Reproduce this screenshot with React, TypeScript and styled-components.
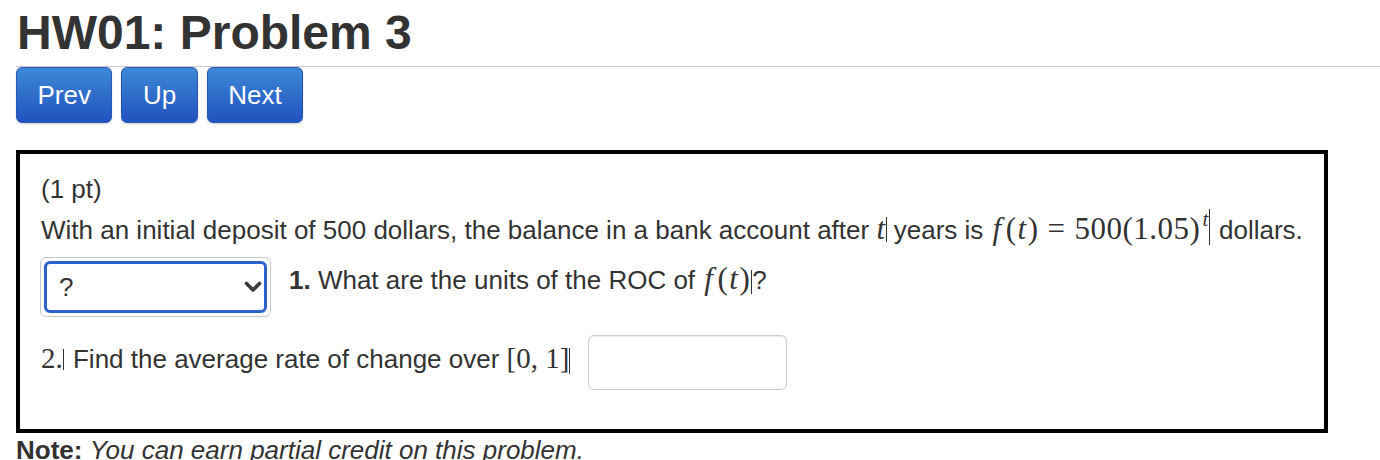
import React from "react";
import styled, { createGlobalStyle } from "styled-components";

const Global = createGlobalStyle`
  html, body { margin: 0; padding: 0; background: #fff; }
  body {
    font-family: "Liberation Sans", Arial, Helvetica, sans-serif;
    color: #333;
    overflow: hidden;
  }
`;

const Page = styled.div`
  padding-left: 16px;
  width: 1364px;
`;

const Title = styled.h1`
  margin: 0;
  padding: 9px 0 0 1px;
  font-size: 48px;
  line-height: 48px;
  font-weight: 700;
  color: #333;
`;

const Rule = styled.hr`
  margin: 9px 0 0;
  border: 0;
  border-top: 1px solid #cccccc;
  height: 0;
`;

const NavBar = styled.div`
  display: flex;
  gap: 9px;
`;

const NavButton = styled.button`
  height: 56px;
  padding: 0 20.5px;
  font-family: inherit;
  font-size: 26px;
  color: #fff;
  background: linear-gradient(#3d89d6, #2152bf);
  border: 1px solid #2a56b6;
  border-radius: 6px;
  box-shadow: 0 1px 2px rgba(0, 0, 0, 0.2);
  cursor: pointer;
`;

const ProblemBox = styled.div`
  margin-top: 27px;
  width: 1312px;
  box-sizing: border-box;
  border: 4px solid #000;
  padding: 16px 20px 39px 21px;
  font-size: 26px;
  line-height: 39px;
`;

const Line = styled.div`
  white-space: nowrap;
`;

const Row = styled.div<{ $top: number }>`
  display: flex;
  align-items: flex-start;
  margin-top: ${(p) => p.$top}px;
  white-space: nowrap;
`;

const RowText = styled.div<{ $pad: number }>`
  padding-top: ${(p) => p.$pad}px;
`;

const Math = styled.span<{ $small?: boolean }>`
  font-family: "Liberation Serif", "Times New Roman", serif;
  font-size: ${(p) => (p.$small ? 29 : 31)}px;
  letter-spacing: ${(p) => (p.$small ? 0 : 0.5)}px;
  line-height: 1;
`;

const MathVar = styled.span`
  font-style: italic;
`;

const FVar = styled.span`
  font-style: italic;
  padding: 0 4px 0 2px;
`;

const Paren = styled.span`
  letter-spacing: 1.5px;
`;

const Sup = styled.sup`
  font-style: italic;
  font-size: 21px;
  line-height: 0;
  vertical-align: 13px;
  margin-left: 2px;
`;

const Op = styled.span`
  margin: 0 9px 0 8px;
`;

const Caret = styled.span<{ $h: number; $dy: number; $gap?: number }>`
  display: inline-block;
  width: 0;
  height: ${(p) => p.$h}px;
  border-left: 1.5px solid #333;
  vertical-align: ${(p) => p.$dy}px;
  margin-right: ${(p) => p.$gap ?? 0}px;
`;

const SelectFrame = styled.div`
  position: relative;
  width: 231px;
  height: 60px;
  box-sizing: border-box;
  border: 1px solid #c9c9c9;
  border-radius: 6px;
  padding: 3px;
  margin-left: -1px;
  margin-right: 18px;
  flex: none;
`;

const Select = styled.select`
  appearance: none;
  -webkit-appearance: none;
  width: 100%;
  height: 100%;
  box-sizing: border-box;
  border: 3px solid #2c62c9;
  border-radius: 6px;
  padding: 0 0 0 12px;
  font-family: "Liberation Sans", Arial, sans-serif;
  font-size: 26px;
  color: #333;
  background: #fff;
  outline: none;
`;

const Chevron = styled.svg`
  position: absolute;
  right: 8px;
  top: 50%;
  transform: translateY(-50%);
  pointer-events: none;
`;

const Answer = styled.input`
  width: 199px;
  height: 55px;
  box-sizing: border-box;
  border: 1px solid #cccccc;
  border-radius: 6px;
  box-shadow: inset 0 1px 1px rgba(0, 0, 0, 0.075);
  margin-left: 18px;
  flex: none;
  font-size: 26px;
`;

const Note = styled.div`
  margin-top: 2px;
  font-size: 26px;
  line-height: 30px;
  white-space: nowrap;
`;

export default function App() {
  return (
    <Page>
      <Global />
      <Title>HW01: Problem 3</Title>
      <Rule />
      <NavBar>
        <NavButton>Prev</NavButton>
        <NavButton>Up</NavButton>
        <NavButton>Next</NavButton>
      </NavBar>
      <ProblemBox>
        <Line>(1 pt)</Line>
        <Line>
          With an initial deposit of 500 dollars, the balance in a bank account after{" "}
          <Math>
            <MathVar>t</MathVar>
          </Math>
          <Caret $h={25} $dy={-3} /> years is{" "}
          <Math>
            <FVar>f</FVar>
            <Paren>
              (<MathVar>t</MathVar>)
            </Paren>
            <Op>=</Op>500(1.05)<Sup>t</Sup>
          </Math>
          <Caret $h={36} $dy={-6} $gap={2} /> dollars.
        </Line>
        <Row $top={7}>
          <SelectFrame>
            <Select defaultValue="?">
              <option value="?">?</option>
            </Select>
            <Chevron width="18" height="12" viewBox="0 0 18 12">
              <path d="M2.5 2.5 L9 9 L15.5 2.5" fill="none" stroke="#3a3a3a" strokeWidth="3.6" strokeLinecap="round" strokeLinejoin="round" />
            </Chevron>
          </SelectFrame>
          <RowText $pad={4}>
            <b>1.</b> What are the units of the ROC of{" "}
            <Math>
              <FVar>f</FVar>
              <Paren>
                (<MathVar>t</MathVar>)
              </Paren>
            </Math>
            <Caret $h={24} $dy={-5} />?
          </RowText>
        </Row>
        <Row $top={18}>
          <RowText $pad={5}>
            <Math $small>2.</Math>
            <Caret $h={21} $dy={-2} $gap={2} /> Find the average rate of change over <Math $small>[0, 1]</Math>
            <Caret $h={26} $dy={-6} />
          </RowText>
          <Answer type="text" />
        </Row>
      </ProblemBox>
      <Note>
        <b>Note:</b> <i>You can earn partial credit on this problem.</i>
      </Note>
    </Page>
  );
}
